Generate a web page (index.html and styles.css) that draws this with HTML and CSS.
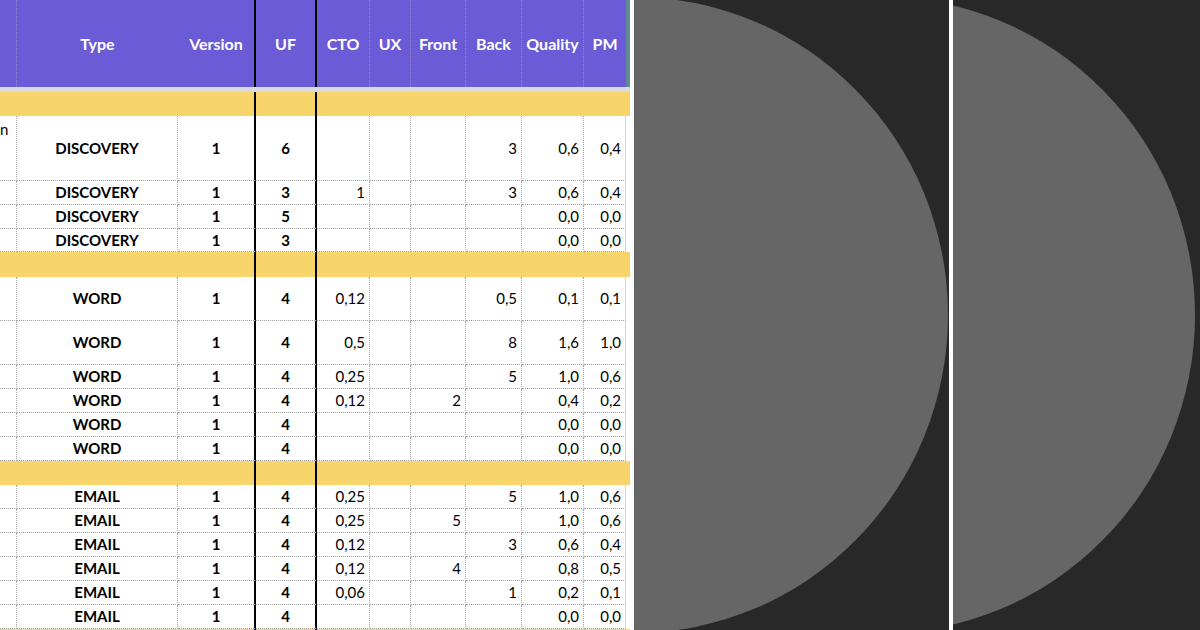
FILE: index.html
```html
<!DOCTYPE html>
<html lang="en">
<head>
<meta charset="utf-8">
<title>Sheet</title>
<link rel="stylesheet" href="styles.css">
</head>
<body>
<main class="screen">
  <section class="sheet">
    <div class="row head">
      <div class="c c0"></div>
      <div class="c ctype">Type</div>
      <div class="c cver">Version</div>
      <div class="c cuf">UF</div>
      <div class="c cn">CTO</div>
      <div class="c cn">UX</div>
      <div class="c cn">Front</div>
      <div class="c cn">Back</div>
      <div class="c cn">Quality</div>
      <div class="c cpm">PM</div>
      <div class="c tail"></div>
    </div>
    <div class="sep"></div>

    <div class="row group"><div class="c c0"></div><div class="c ctype"></div><div class="c cver"></div><div class="c cuf"></div><div class="c cn"></div><div class="c cn"></div><div class="c cn"></div><div class="c cn"></div><div class="c cn"></div><div class="c cpm"></div><div class="c tail"></div></div>

    <div class="row data h65">
      <div class="c c0 top">n</div><div class="c ctype">DISCOVERY</div><div class="c cver">1</div><div class="c cuf">6</div>
      <div class="c cn"></div><div class="c cn"></div><div class="c cn"></div><div class="c cn">3</div><div class="c cn">0,6</div><div class="c cpm">0,4</div><div class="c tail"></div>
    </div>
    <div class="row data">
      <div class="c c0"></div><div class="c ctype">DISCOVERY</div><div class="c cver">1</div><div class="c cuf">3</div>
      <div class="c cn">1</div><div class="c cn"></div><div class="c cn"></div><div class="c cn">3</div><div class="c cn">0,6</div><div class="c cpm">0,4</div><div class="c tail"></div>
    </div>
    <div class="row data">
      <div class="c c0"></div><div class="c ctype">DISCOVERY</div><div class="c cver">1</div><div class="c cuf">5</div>
      <div class="c cn"></div><div class="c cn"></div><div class="c cn"></div><div class="c cn"></div><div class="c cn">0,0</div><div class="c cpm">0,0</div><div class="c tail"></div>
    </div>
    <div class="row data h23">
      <div class="c c0"></div><div class="c ctype">DISCOVERY</div><div class="c cver">1</div><div class="c cuf">3</div>
      <div class="c cn"></div><div class="c cn"></div><div class="c cn"></div><div class="c cn"></div><div class="c cn">0,0</div><div class="c cpm">0,0</div><div class="c tail"></div>
    </div>

    <div class="row group h25"><div class="c c0"></div><div class="c ctype"></div><div class="c cver"></div><div class="c cuf"></div><div class="c cn"></div><div class="c cn"></div><div class="c cn"></div><div class="c cn"></div><div class="c cn"></div><div class="c cpm"></div><div class="c tail"></div></div>

    <div class="row data h44">
      <div class="c c0"></div><div class="c ctype">WORD</div><div class="c cver">1</div><div class="c cuf">4</div>
      <div class="c cn">0,12</div><div class="c cn"></div><div class="c cn"></div><div class="c cn">0,5</div><div class="c cn">0,1</div><div class="c cpm">0,1</div><div class="c tail"></div>
    </div>
    <div class="row data h44">
      <div class="c c0"></div><div class="c ctype">WORD</div><div class="c cver">1</div><div class="c cuf">4</div>
      <div class="c cn">0,5</div><div class="c cn"></div><div class="c cn"></div><div class="c cn">8</div><div class="c cn">1,6</div><div class="c cpm">1,0</div><div class="c tail"></div>
    </div>
    <div class="row data">
      <div class="c c0"></div><div class="c ctype">WORD</div><div class="c cver">1</div><div class="c cuf">4</div>
      <div class="c cn">0,25</div><div class="c cn"></div><div class="c cn"></div><div class="c cn">5</div><div class="c cn">1,0</div><div class="c cpm">0,6</div><div class="c tail"></div>
    </div>
    <div class="row data">
      <div class="c c0"></div><div class="c ctype">WORD</div><div class="c cver">1</div><div class="c cuf">4</div>
      <div class="c cn">0,12</div><div class="c cn"></div><div class="c cn">2</div><div class="c cn"></div><div class="c cn">0,4</div><div class="c cpm">0,2</div><div class="c tail"></div>
    </div>
    <div class="row data">
      <div class="c c0"></div><div class="c ctype">WORD</div><div class="c cver">1</div><div class="c cuf">4</div>
      <div class="c cn"></div><div class="c cn"></div><div class="c cn"></div><div class="c cn"></div><div class="c cn">0,0</div><div class="c cpm">0,0</div><div class="c tail"></div>
    </div>
    <div class="row data">
      <div class="c c0"></div><div class="c ctype">WORD</div><div class="c cver">1</div><div class="c cuf">4</div>
      <div class="c cn"></div><div class="c cn"></div><div class="c cn"></div><div class="c cn"></div><div class="c cn">0,0</div><div class="c cpm">0,0</div><div class="c tail"></div>
    </div>

    <div class="row group"><div class="c c0"></div><div class="c ctype"></div><div class="c cver"></div><div class="c cuf"></div><div class="c cn"></div><div class="c cn"></div><div class="c cn"></div><div class="c cn"></div><div class="c cn"></div><div class="c cpm"></div><div class="c tail"></div></div>

    <div class="row data">
      <div class="c c0"></div><div class="c ctype">EMAIL</div><div class="c cver">1</div><div class="c cuf">4</div>
      <div class="c cn">0,25</div><div class="c cn"></div><div class="c cn"></div><div class="c cn">5</div><div class="c cn">1,0</div><div class="c cpm">0,6</div><div class="c tail"></div>
    </div>
    <div class="row data">
      <div class="c c0"></div><div class="c ctype">EMAIL</div><div class="c cver">1</div><div class="c cuf">4</div>
      <div class="c cn">0,25</div><div class="c cn"></div><div class="c cn">5</div><div class="c cn"></div><div class="c cn">1,0</div><div class="c cpm">0,6</div><div class="c tail"></div>
    </div>
    <div class="row data">
      <div class="c c0"></div><div class="c ctype">EMAIL</div><div class="c cver">1</div><div class="c cuf">4</div>
      <div class="c cn">0,12</div><div class="c cn"></div><div class="c cn"></div><div class="c cn">3</div><div class="c cn">0,6</div><div class="c cpm">0,4</div><div class="c tail"></div>
    </div>
    <div class="row data">
      <div class="c c0"></div><div class="c ctype">EMAIL</div><div class="c cver">1</div><div class="c cuf">4</div>
      <div class="c cn">0,12</div><div class="c cn"></div><div class="c cn">4</div><div class="c cn"></div><div class="c cn">0,8</div><div class="c cpm">0,5</div><div class="c tail"></div>
    </div>
    <div class="row data">
      <div class="c c0"></div><div class="c ctype">EMAIL</div><div class="c cver">1</div><div class="c cuf">4</div>
      <div class="c cn">0,06</div><div class="c cn"></div><div class="c cn"></div><div class="c cn">1</div><div class="c cn">0,2</div><div class="c cpm">0,1</div><div class="c tail"></div>
    </div>
    <div class="row data">
      <div class="c c0"></div><div class="c ctype">EMAIL</div><div class="c cver">1</div><div class="c cuf">4</div>
      <div class="c cn"></div><div class="c cn"></div><div class="c cn"></div><div class="c cn"></div><div class="c cn">0,0</div><div class="c cpm">0,0</div><div class="c tail"></div>
    </div>

    <div class="row group"><div class="c c0"></div><div class="c ctype"></div><div class="c cver"></div><div class="c cuf"></div><div class="c cn"></div><div class="c cn"></div><div class="c cn"></div><div class="c cn"></div><div class="c cn"></div><div class="c cpm"></div><div class="c tail"></div></div>
  </section>

  <section class="panel panel-a">
    <svg class="shape" width="315" height="630" viewBox="0 0 315 630" aria-hidden="true">
      <ellipse cx="0" cy="315" rx="314" ry="318" fill="#666666"/>
    </svg>
  </section>
  <section class="panel panel-b">
    <svg class="shape" width="247" height="630" viewBox="0 0 247 630" aria-hidden="true">
      <ellipse cx="-72" cy="315" rx="314" ry="318" fill="#666666"/>
    </svg>
  </section>
</main>
</body>
</html>
```

FILE: styles.css
```css
* { box-sizing: border-box; }

html, body {
  margin: 0;
  padding: 0;
}

body {
  width: 1200px;
  height: 630px;
  overflow: hidden;
  background: #ffffff;
  font-family: "Lato", "Open Sans", "Liberation Sans", sans-serif;
}

.screen {
  display: flex;
  gap: 4px;
  width: 1200px;
  height: 630px;
  overflow: hidden;
  background: #ffffff;
}

/* ---------- spreadsheet ---------- */
.sheet {
  flex: 0 0 630px;
  height: 630px;
  overflow: hidden;
  background: #ffffff;
}

.row {
  display: grid;
  grid-template-columns: 17px 161px 78px 61px 53px 41px 55px 56px 62px 42px 4px;
  height: 24px;
}

.c {
  display: flex;
  align-items: center;
  min-width: 0;
  overflow: hidden;
  white-space: nowrap;
}

.cver, .cuf { border-right: 2px solid #000000; }

/* header */
.head {
  height: 87px;
  background: #6b5bd7;
  color: #ffffff;
  font-weight: 700;
  font-size: 16px;
}
.head .c { justify-content: center; padding-bottom: 1px; }
.head .c0,
.head .cn { border-right: 1px dotted rgba(255, 255, 255, 0.25); }
.head .tail { background: #62889a; }

.sep {
  height: 5px;
  background: #d9d9de;
}

/* group separator rows */
.group { background: #f8d56b; }
.h25 { height: 25px; }

/* data rows */
.data {
  font-size: 15px;
  color: #000000;
}
.h65 { height: 65px; }
.h44 { height: 44px; }
.h23 { height: 23px; }

.data .c0,
.data .ctype,
.data .cver,
.data .cuf,
.data .cn,
.data .cpm {
  border-bottom: 1px dotted #9c9c9c;
}
.data .c0,
.data .ctype,
.data .cn { border-right: 1px dotted #a8a8a8; }
.data .cpm { border-right: 1px solid #d4d4d4; }

.data .ctype,
.data .cver,
.data .cuf {
  justify-content: center;
  font-weight: 700;
  padding-bottom: 1px;
}
.data .cn,
.data .cpm {
  justify-content: flex-end;
  padding-right: 4px;
  padding-bottom: 1px;
}
.data .c0.top {
  align-items: flex-start;
  padding-top: 4px;
}

/* ---------- dark panels ---------- */
.panel {
  height: 630px;
  background: #282828;
  overflow: hidden;
}
.panel-a { flex: 0 0 315px; }
.panel-b { flex: 0 0 247px; }
.shape { display: block; }
```
